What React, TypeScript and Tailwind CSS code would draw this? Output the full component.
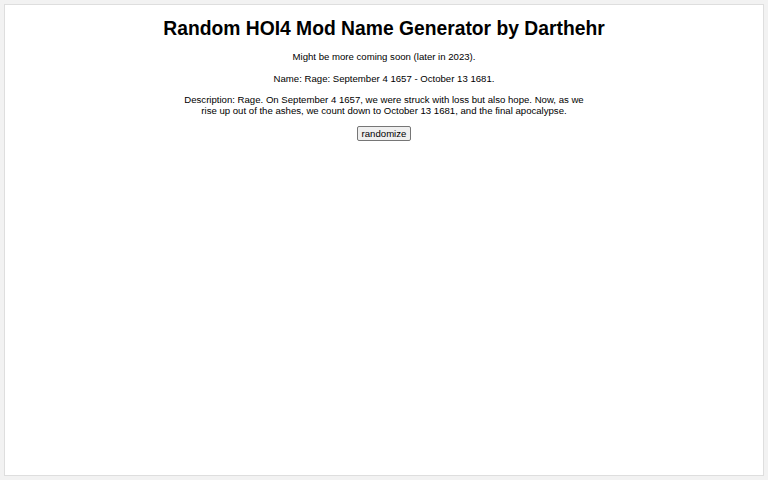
import React, { useState } from 'react';

const NAME = 'Rage: September 4 1657 - October 13 1681.';
const DESCRIPTION =
  'Rage. On September 4 1657, we were struck with loss but also hope. Now, as we rise up out of the ashes, we count down to October 13 1681, and the final apocalypse.';

export default function App() {
  const [count, setCount] = useState(0);

  return (
    <div className="h-[480px] w-[768px] bg-[#f2f2f2] p-[4px] font-['Liberation_Sans',Arial,sans-serif] text-black">
      <main className="flex h-[472px] flex-col items-center border border-[#dedede] bg-white pt-[12px] text-center">
        <h1 className="text-[19.3px] leading-[23px] font-bold">Random HOI4 Mod Name Generator by Darthehr</h1>
        <p className="mt-[11px] text-[9.6px] leading-[11px]">Might be more coming soon (later in 2023).</p>
        <p className="mt-[11px] text-[9.6px] leading-[11px]">Name: {NAME}</p>
        <p className="mt-[10px] max-w-[404px] text-[9.6px] leading-[11px]">Description: {DESCRIPTION}</p>
        <button
          key={count}
          onClick={() => setCount(count + 1)}
          className="mt-[10px] h-[15px] rounded-[2px] border border-[#767676] bg-[#efefef] px-[4px] text-[9.6px] leading-[11px]"
        >
          randomize
        </button>
      </main>
    </div>
  );
}
